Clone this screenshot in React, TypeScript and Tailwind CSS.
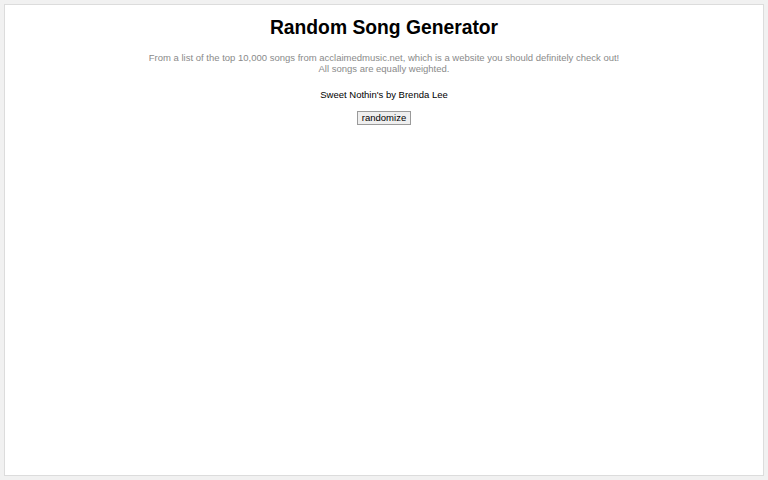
import { useState } from "react";

const songs = [
  "Sweet Nothin's by Brenda Lee",
  "Like a Rolling Stone by Bob Dylan",
  "Heroes by David Bowie",
  "Waterloo Sunset by The Kinks",
];

export default function App() {
  const [song, setSong] = useState(songs[0]);

  const randomize = () =>
    setSong(songs[Math.floor(Math.random() * songs.length)]);

  return (
    <div className="flex h-screen bg-[#f1f1f1] p-1 font-['Liberation_Sans',Arial,sans-serif]">
      <div className="flex flex-1 flex-col items-center border border-[#dcdcdc] bg-white pt-[9px] text-center">
        <h1 className="text-[19.3px] font-bold leading-[28px] text-black">
          Random Song Generator
        </h1>

        <p className="mt-[10px] text-[9.5px] leading-[11px] text-[#8a8a8a]">
          From a list of the top 10,000 songs from acclaimedmusic.net, which is
          a website you should definitely check out!
          <br />
          All songs are equally weighted.
        </p>

        <p className="mt-[15px] text-[9.5px] leading-[12px] text-black">
          {song}
        </p>

        <button
          type="button"
          onClick={randomize}
          className="mt-[10px] border border-[#9a9a9a] bg-[#efefef] px-[4px] text-[9.5px] leading-[12px] text-black"
        >
          randomize
        </button>
      </div>
    </div>
  );
}
